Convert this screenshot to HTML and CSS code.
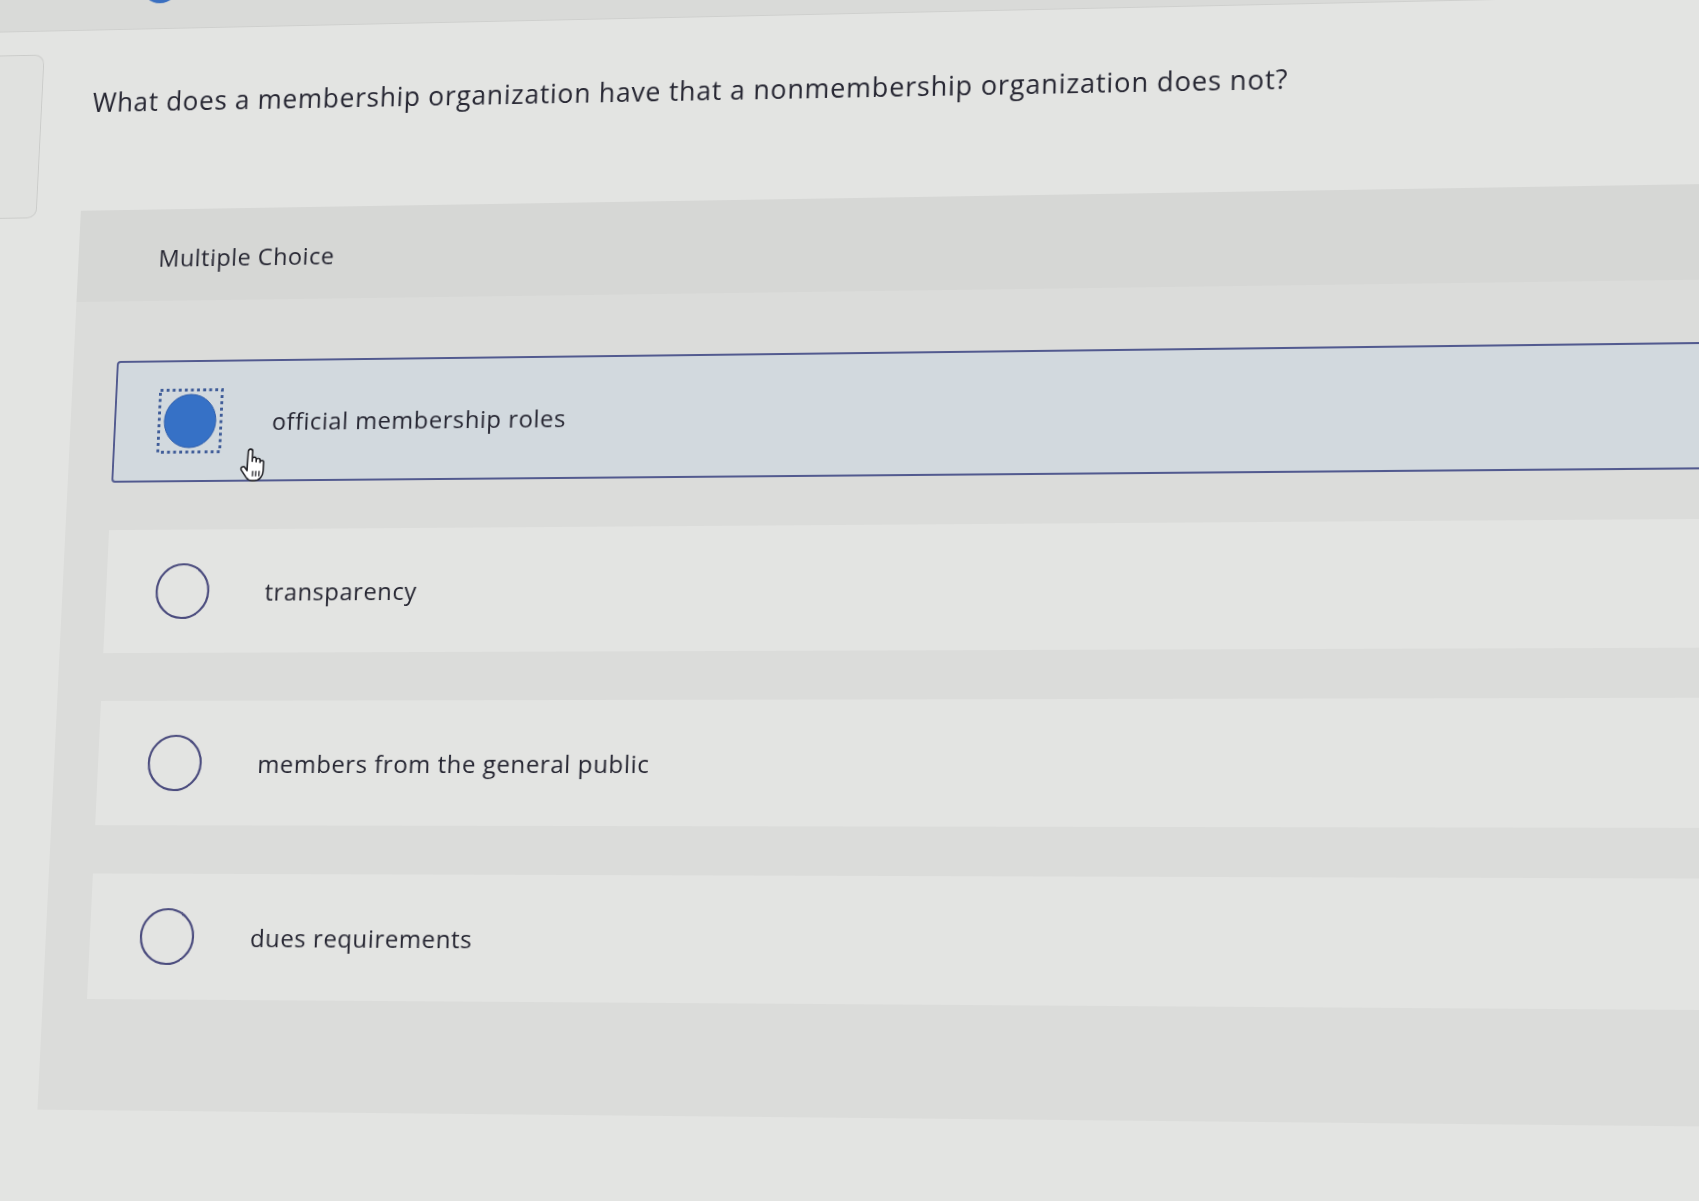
FILE: index.html
```html
<!DOCTYPE html>
<html lang="en">
<head>
<meta charset="utf-8">
<title>Multiple Choice</title>
<link rel="stylesheet" href="styles.css">
</head>
<body>
<div class="screen">
  <header class="topbar"><span class="progress-dot"></span></header>
  <div class="layout">
    <aside class="side-tab"></aside>
    <main class="content">
      <h1 class="question">What does a membership organization have that a nonmembership organization does not?</h1>
      <section class="card">
        <div class="card-head">Multiple Choice</div>
        <div class="options">
          <div class="option selected">
            <span class="radio">
              <svg width="68" height="66" viewBox="0 0 68 66">
                <rect x="1.5" y="1.5" width="65" height="63" fill="none" stroke="#3f5c98" stroke-width="3" stroke-dasharray="3 3.4"/>
                <circle cx="34" cy="33" r="27" fill="#3671c6" stroke="#2d5cab" stroke-width="1"/>
              </svg>
            </span>
            <span class="label">official membership roles</span>
            <svg class="cursor" viewBox="0 0 24 26">
              <path d="M7.6 2.6c0-1 .7-1.8 1.7-1.8s1.7.8 1.7 1.8V10V8.4c0-.9.7-1.5 1.5-1.5s1.5.6 1.5 1.5V10.4V9.3c0-.9.7-1.5 1.5-1.5s1.5.6 1.5 1.5v1.6c0-.8.6-1.4 1.4-1.4s1.4.6 1.4 1.4v6.2c0 4-2.5 7.5-6.6 7.5h-1.8c-2.3 0-3.6-1-4.8-2.6l-3.8-5.4c-.6-.8-.4-1.8.4-2.3.8-.5 1.8-.3 2.3.4l1.7 2.3z" fill="#ffffff" stroke="#1f1f24" stroke-width="1.2" stroke-linejoin="round"/>
              <path d="M11.6 17.2v4.2M14.1 17.2v4.2M16.6 17.2v4.2" stroke="#1f1f24" stroke-width="1"/>
            </svg>
          </div>
          <div class="option">
            <span class="radio">
              <svg width="68" height="66" viewBox="0 0 68 66"><circle cx="34" cy="33" r="27" fill="none" stroke="#4b4c7e" stroke-width="2.2"/></svg>
            </span>
            <span class="label">transparency</span>
          </div>
          <div class="option">
            <span class="radio">
              <svg width="68" height="66" viewBox="0 0 68 66"><circle cx="34" cy="33" r="27" fill="none" stroke="#4b4c7e" stroke-width="2.2"/></svg>
            </span>
            <span class="label">members from the general public</span>
          </div>
          <div class="option">
            <span class="radio">
              <svg width="68" height="66" viewBox="0 0 68 66"><circle cx="34" cy="33" r="27" fill="none" stroke="#4b4c7e" stroke-width="2.2"/></svg>
            </span>
            <span class="label">dues requirements</span>
          </div>
        </div>
      </section>
    </main>
  </div>
</div>
</body>
</html>
```

FILE: styles.css
```css
html,
body {
  margin: 0;
  padding: 0;
  overflow: hidden;
  background: #e2e3e1;
}

body {
  width: 1699px;
  height: 1201px;
}

/* the photographed screen: flat layout, tilted the way the camera saw it */
.screen {
  width: 1800px;
  height: 1300px;
  display: flex;
  flex-direction: column;
  background: #e2e3e1;
  color: #262632;
  font-family: "Open Sans", "Liberation Sans", sans-serif;
  font-weight: 500;
  transform-origin: 0 0;
  transform: matrix3d(0.929651, -0.021143, 0, -0.0000275299,
                      -0.048759, 0.955164, 0, -0.0000286976,
                      0, 0, 1, 0,
                      -13.772, -22.406, 0, 1.0028);
}

.topbar {
  height: 58px;
  box-sizing: border-box;
  flex: none;
  display: flex;
  padding-left: 168px;
  background: #d9dad8;
  border-bottom: 1px solid #cfd0ce;
}

.progress-dot {
  width: 40px;
  height: 40px;
  margin-top: -9px;
  border-radius: 50%;
  background: #3a6fc0;
}

.layout {
  flex: 1;
  display: flex;
  background: #e3e4e2;
}

.side-tab {
  flex: none;
  width: 67px;
  height: 170px;
  margin-top: 24px;
  box-sizing: border-box;
  border: 1px solid #cbccca;
  border-left: none;
  border-radius: 0 10px 10px 0;
  background: #e0e1df;
}

.content {
  flex: 1;
  display: flex;
  flex-direction: column;
  margin-left: 47px;
}

.question {
  margin: 57px 0 0;
  padding-left: 7px;
  font-size: 27.5px;
  letter-spacing: 0.8px;
  line-height: 36px;
  font-weight: 500;
  white-space: nowrap;
}

.card {
  margin-top: 94px;
  background: #dbdcda;
}

.card-head {
  height: 94px;
  box-sizing: border-box;
  padding: 34px 0 0 85px;
  font-size: 24.5px;
  letter-spacing: 0.6px;
  line-height: 32px;
  background: #d6d7d5;
}

.options {
  display: flex;
  flex-direction: column;
  gap: 48px;
  padding: 61px 0 109px 46px;
}

.option {
  position: relative;
  display: flex;
  align-items: center;
  height: 124px;
  box-sizing: border-box;
  padding-left: 44px;
  border: 2px solid transparent;
  background: #e3e4e2;
  font-size: 24.5px;
  letter-spacing: 0.6px;
}

.option.selected {
  border-color: #525a8f;
  border-radius: 4px 0 0 4px;
  background: #d2d9de;
}

.radio {
  flex: none;
  width: 68px;
  height: 68px;
  display: flex;
  align-items: center;
  justify-content: center;
}

.label {
  margin-left: 52px;
  white-space: nowrap;
}

.cursor {
  position: absolute;
  left: 130px;
  top: 88px;
  width: 33px;
  height: 35px;
}
```
